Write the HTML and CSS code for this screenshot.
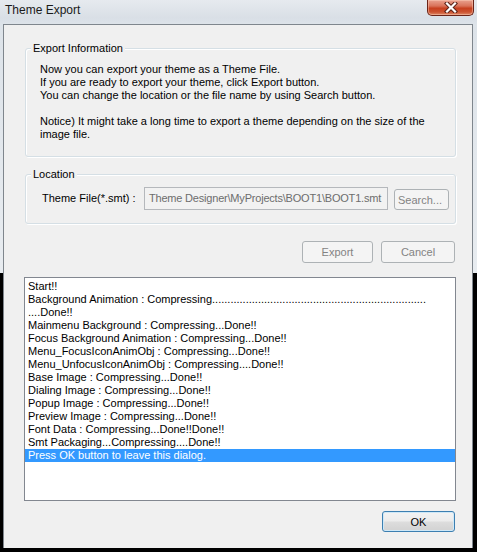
FILE: index.html
```html
<!DOCTYPE html>
<html>
<head>
<meta charset="utf-8">
<title>Theme Export</title>
<link rel="stylesheet" href="styles.css">
</head>
<body>
<div class="window">
  <div class="titlebar">
    <span class="title">Theme Export</span>
    <div class="close">
      <svg width="14" height="11" viewBox="0 0 14 11">
        <path d="M3 1.5 L11 9.5 M11 1.5 L3 9.5" stroke="#5a2318" stroke-width="4.2" stroke-linecap="square" fill="none"/>
        <path d="M3 1.5 L11 9.5 M11 1.5 L3 9.5" stroke="#ffffff" stroke-width="2.2" stroke-linecap="square" fill="none"/>
      </svg>
    </div>
  </div>
  <div class="client">
    <div class="group info">
      <span class="group-label">Export Information</span>
      <div class="info-text">
        <div>Now you can export your theme as a Theme File.</div>
        <div>If you are ready to export your theme, click Export button.</div>
        <div>You can change the location or the file name by using Search button.</div>
        <div class="blank"></div>
        <div>Notice) It might take a long time to export a theme depending on the size of the</div>
        <div>image file.</div>
      </div>
    </div>
    <div class="group location">
      <span class="group-label">Location</span>
      <div class="loc-row">
        <span class="loc-label">Theme File(*.smt) :</span>
        <div class="input">Theme Designer\MyProjects\BOOT1\BOOT1.smt</div>
        <div class="btn disabled search">Search...</div>
      </div>
    </div>
    <div class="actions">
      <div class="btn disabled export">Export</div>
      <div class="btn disabled cancel">Cancel</div>
    </div>
    <div class="log">
      <div class="line">Start!!</div>
      <div class="line">Background Animation : Compressing......................................................................</div>
      <div class="line">....Done!!</div>
      <div class="line">Mainmenu Background : Compressing...Done!!</div>
      <div class="line">Focus Background Animation : Compressing...Done!!</div>
      <div class="line">Menu_FocusIconAnimObj : Compressing...Done!!</div>
      <div class="line">Menu_UnfocusIconAnimObj : Compressing....Done!!</div>
      <div class="line">Base Image : Compressing...Done!!</div>
      <div class="line">Dialing Image : Compressing...Done!!</div>
      <div class="line">Popup Image : Compressing...Done!!</div>
      <div class="line">Preview Image : Compressing...Done!!</div>
      <div class="line">Font Data : Compressing...Done!!Done!!</div>
      <div class="line">Smt Packaging...Compressing....Done!!</div>
      <div class="line selected">Press OK button to leave this dialog.</div>
    </div>
    <div class="footer">
      <div class="btn ok">OK</div>
    </div>
  </div>
</div>
</body>
</html>
```

FILE: styles.css
```css
* {
  box-sizing: border-box;
}

html, body {
  margin: 0;
  padding: 0;
}

body {
  width: 477px;
  height: 552px;
  overflow: hidden;
  font-family: "Liberation Sans", Arial, sans-serif;
  font-size: 11px;
  color: #000;
}

.window {
  width: 477px;
  height: 552px;
  display: flex;
  flex-direction: column;
  padding: 0 4px 4px 3px;
  background: linear-gradient(to bottom, #e6eaef 0px, #d9dfe6 18px, #dde3e9 24px, #e8ecf0 273px, #000 273px, #000 552px);
}

.titlebar {
  height: 24px;
  display: flex;
  justify-content: space-between;
  align-items: flex-start;
  margin-right: -1px;
}

.title {
  padding: 3px 0 0 2px;
  font-size: 12px;
  line-height: 14px;
  color: #1a1a1a;
}

.close {
  width: 47px;
  height: 16px;
  border: 1px solid #6b2418;
  border-top: none;
  border-radius: 0 0 5px 5px;
  background: linear-gradient(to bottom, #e9a28f 0%, #d9735a 40%, #c7401f 55%, #cc5331 80%, #de8a68 100%);
  box-shadow: inset 0 0 0 1px rgba(255, 210, 190, 0.45);
  display: flex;
  align-items: center;
  justify-content: center;
}

.client {
  flex: 1;
  background: #f0f0f0;
  border: 1px solid #7f868d;
  border-bottom: none;
  display: flex;
  flex-direction: column;
  align-items: flex-start;
}

.group {
  position: relative;
  margin-left: 21px;
  width: 431px;
  border: 1px solid #d5dfe5;
  border-radius: 3px;
  box-shadow: 1px 1px 0 #ffffff, inset 1px 1px 0 #ffffff;
}

.group-label {
  position: absolute;
  top: -7px;
  left: 5px;
  padding: 0 2px;
  line-height: 13px;
  background: #f0f0f0;
}

.info {
  margin-top: 23px;
  height: 109px;
}

.info-text {
  padding: 14px 0 0 14px;
  line-height: 13px;
}

.blank {
  height: 13px;
}

.location {
  margin-top: 17px;
  height: 50px;
}

.loc-row {
  display: flex;
  align-items: flex-start;
  padding: 12px 0 0 16px;
}

.loc-label {
  flex: 0 0 102px;
  line-height: 23px;
}

.input {
  width: 244px;
  height: 23px;
  border: 1px solid #b5b8bc;
  background: #f2f2f2;
  color: #6d6d6d;
  line-height: 21px;
  padding-left: 4px;
  letter-spacing: -0.2px;
  white-space: nowrap;
  overflow: hidden;
}

.btn {
  height: 22px;
  border-radius: 3px;
  display: flex;
  align-items: center;
  justify-content: center;
  white-space: nowrap;
}

.disabled {
  border: 1px solid #adb2b5;
  background: #f4f4f4;
  color: #838383;
}

.search {
  width: 55px;
  height: 21px;
  margin: 2px 0 0 6px;
  justify-content: flex-start;
  padding-left: 3px;
  overflow: hidden;
}

.actions {
  margin-top: 17px;
  margin-left: 21px;
  width: 431px;
  display: flex;
  justify-content: flex-end;
  gap: 8px;
  padding-right: 1px;
}

.export {
  width: 71px;
}

.cancel {
  width: 74px;
}

.log {
  margin-top: 14px;
  margin-left: 20px;
  width: 432px;
  height: 224px;
  border: 1px solid #828790;
  background: #ffffff;
  padding-top: 2px;
  line-height: 13px;
  overflow: hidden;
}

.line {
  padding-left: 3px;
  white-space: nowrap;
  height: 13px;
}

.selected {
  background: #3399ff;
  color: #ffffff;
}

.footer {
  margin-top: 10px;
  margin-left: 378px;
}

.ok {
  width: 73px;
  height: 21px;
  border: 1px solid #3c7fb1;
  background: linear-gradient(to bottom, #f3f3f3 0%, #ececec 48%, #dddddd 52%, #d2d2d2 100%);
  box-shadow: inset 0 0 0 1px #cfe8f7;
  color: #000;
}
```
